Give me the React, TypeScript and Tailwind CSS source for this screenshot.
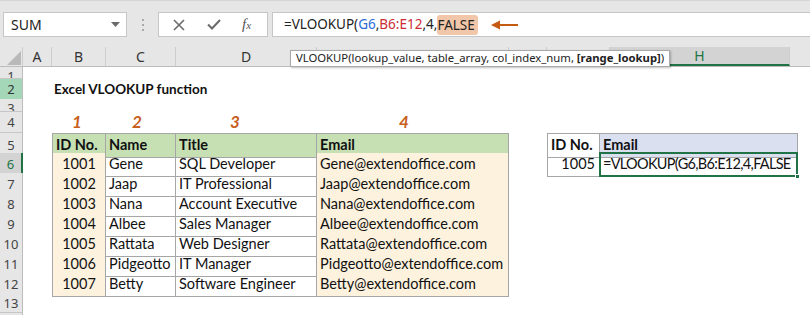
import React from 'react';

const ui = { fontFamily: '"Noto Sans", "Open Sans", sans-serif' };
const cell = { fontFamily: 'Lato, "Open Sans", sans-serif' };

const GRID = 'grid grid-cols-[23px_29px_54px_70px_141px_192px_38px_53px_198px_1fr]';

const data = [
  ['1001', 'Gene', 'SQL Developer', 'Gene@extendoffice.com'],
  ['1002', 'Jaap', 'IT Professional', 'Jaap@extendoffice.com'],
  ['1003', 'Nana', 'Account Executive', 'Nana@extendoffice.com'],
  ['1004', 'Albee', 'Sales Manager', 'Albee@extendoffice.com'],
  ['1005', 'Rattata', 'Web Designer', 'Rattata@extendoffice.com'],
  ['1006', 'Pidgeotto', 'IT Manager', 'Pidgeotto@extendoffice.com'],
  ['1007', 'Betty', 'Software Engineer', 'Betty@extendoffice.com'],
];

const RowHead: React.FC<{ label: string; kind?: 'green' | 'active'; top?: boolean }> = ({ label, kind, top }) => {
  let cls = 'bg-[#e6e6e6] text-[#444]';
  if (kind === 'green') cls = 'bg-[#a3d7b8] text-[#333]';
  if (kind === 'active') cls = 'bg-[#d3d3d3] text-[#217346] border-r-2 border-r-[#217346]';
  return (
    <div
      style={ui}
      className={`${cls} flex justify-center overflow-hidden border-b border-b-[#c6c6c6] text-[13px] leading-[18px] ${top ? 'items-start' : 'items-center'} ${kind === 'active' ? '' : 'border-r border-r-[#bcbcbc]'}`}
    >
      {label}
    </div>
  );
};

const FormulaBar = () => (
  <div className="h-[47px] bg-[#e6e6e6] border-t border-t-[#d6d6d6] flex items-start pt-[11px] pl-[3px]" style={ui}>
    <div className="w-[124px] h-[25px] bg-white border border-[#c6c6c6] flex items-center justify-between pl-[7px] pr-[6px]">
      <span className="text-[14px] text-[#222]">SUM</span>
      <svg width="9" height="5" viewBox="0 0 9 5"><path d="M0 0h9L4.5 5z" fill="#6b6b6b" /></svg>
    </div>
    <div className="w-[31px] h-[25px] flex flex-col items-center justify-center gap-[3px]">
      <span className="w-[2px] h-[2px] bg-[#a8a8a8]" />
      <span className="w-[2px] h-[2px] bg-[#a8a8a8]" />
      <span className="w-[2px] h-[2px] bg-[#a8a8a8]" />
    </div>
    <div className="w-[110px] h-[25px] bg-white border border-[#c6c6c6] flex items-center pl-[13px]">
      <svg width="12" height="12" viewBox="0 0 12 12" className="ml-[1px]">
        <path d="M1 1l10 10M11 1L1 11" stroke="#6a6a6a" strokeWidth="1.6" />
      </svg>
      <svg width="14" height="11" viewBox="0 0 14 11" className="ml-[22px]">
        <path d="M1 5.5l4 4L13 1" stroke="#6a6a6a" strokeWidth="2" fill="none" />
      </svg>
      <span className="ml-[21px] text-[15px] italic text-[#555] leading-none" style={{ fontFamily: '"Liberation Serif", serif' }}>
        f<span className="text-[11px]">x</span>
      </span>
    </div>
    <div className="flex-1 ml-[4px] h-[25px] bg-white border border-[#c6c6c6] border-r-0 flex items-center pl-[11px] text-[13.5px] text-[#222]">
      <span>=VLOOKUP(</span>
      <span className="text-[#2a6bd4]">G6</span>
      <span>,</span>
      <span className="text-[#cc2b36]">B6:E12</span>
      <span>,4,</span>
      <span className="bg-[#f2c6a8] rounded-[3px] pr-[3px] leading-[20px]">FALSE</span>
      <svg width="27" height="10" viewBox="0 0 27 10" className="ml-[13px]">
        <path d="M27 5H6" stroke="#c55a11" strokeWidth="2" />
        <path d="M0 5l9-4.5v9z" fill="#c55a11" />
      </svg>
    </div>
  </div>
);

const ColHeaders = () => {
  const cols: [string, string][] = [
    ['', 'w-[23px]'],
    ['A', 'w-[29px]'],
    ['B', 'w-[54px]'],
    ['C', 'w-[70px]'],
    ['D', 'w-[141px]'],
    ['E', 'w-[192px]'],
    ['F', 'w-[38px]'],
    ['G', 'w-[63px]'],
    ['H', 'w-[180px]'],
  ];
  return (
    <div className="relative h-[20px] flex bg-[#e6e6e6] border-b border-b-[#bcbcbc] text-[14px] text-[#333]" style={ui}>
      {cols.map(([c, w], i) => (
        <div
          key={i}
          className={`${w} h-full flex items-center justify-center border-r border-r-[#cdcdcd] ${
            c === 'H' ? 'bg-[#d3d3d3] text-[#217346] border-b-2 border-b-[#217346]' : ''
          }`}
        >
          {i === 0 ? (
            <svg width="14" height="14" viewBox="0 0 14 14" className="ml-[5px] mt-[2px]">
              <path d="M14 0v14H0z" fill="#b9b9b9" />
            </svg>
          ) : (
            c
          )}
        </div>
      ))}
      <div className="flex-1" />
      {/* function argument tooltip */}
      <div className="absolute left-[290px] top-[3px] w-[380px] h-[17px] bg-white border border-[#a9a9a9] shadow-[1px_1px_2px_rgba(0,0,0,0.25)] pl-[5px] flex items-center text-[11.3px] text-[#222] whitespace-nowrap">
        VLOOKUP(lookup_value, table_array, col_index_num,&nbsp;<b>[range_lookup]</b>)
      </div>
    </div>
  );
};

const tb = 'border-[#a6a6a6]';

export default function App() {
  return (
    <div className="w-[810px] h-[315px] overflow-hidden bg-white">
      <FormulaBar />
      <ColHeaders />

      {/* row 1 */}
      <div className={`${GRID} h-[12px]`}>
        <RowHead label="1" top />
      </div>
      {/* row 2 */}
      <div className={`${GRID} h-[20px]`}>
        <RowHead label="2" kind="green" />
        <div />
        <div className="col-span-4 flex items-end pl-[2px] pb-[1px] font-bold text-[13.5px] text-[#111]" style={cell}>
          Excel VLOOKUP function
        </div>
      </div>
      {/* row 3 */}
      <div className={`${GRID} h-[13px]`}>
        <RowHead label="3" top />
      </div>
      {/* row 4 */}
      <div className={`${GRID} h-[21px]`}>
        <RowHead label="4" />
        <div />
        <div className="pl-[20px] pt-[1px] italic font-bold text-[17px] leading-none text-[#c8601e]" style={cell}>1</div>
        <div className="pl-[26px] pt-[1px] italic font-bold text-[17px] leading-none text-[#c8601e]" style={cell}>2</div>
        <div className="pl-[54px] pt-[1px] italic font-bold text-[17px] leading-none text-[#c8601e]" style={cell}>3</div>
        <div className="pl-[82px] pt-[1px] italic font-bold text-[17px] leading-none text-[#c8601e]" style={cell}>4</div>
      </div>
      {/* row 5: headers */}
      <div className={`${GRID} h-[20px] text-[14.5px] text-[#111]`} style={cell}>
        <RowHead label="5" />
        <div />
        {['ID No.', 'Name', 'Title', 'Email'].map((h, i) => (
          <div
            key={h}
            className={`bg-[#c6e0b4] font-bold flex items-end pb-[1px] pl-[3px] border-t border-r border-b ${tb} ${i === 0 ? 'border-l' : ''}`}
          >
            {h}
          </div>
        ))}
        <div />
        <div className={`font-bold flex items-end pb-[1px] pl-[3px] border ${tb}`}>ID No.</div>
        <div className={`bg-[#dbe0f1] font-bold flex items-end pb-[1px] pl-[3px] border-t border-r border-b ${tb}`}>Email</div>
      </div>
      {/* rows 6-12 */}
      {data.map((r, idx) => (
        <div key={r[0]} className={`${GRID} h-[20px] text-[14.5px] text-[#111]`} style={cell}>
          <RowHead label={String(idx + 6)} kind={idx === 0 ? 'active' : undefined} />
          <div />
          <div className={`bg-[#fdf2de] flex items-end justify-center pb-[1px] border-l border-r border-b ${tb}`}>{r[0]}</div>
          <div className={`flex items-end pb-[1px] pl-[3px] border-r border-b whitespace-nowrap ${tb}`}>{r[1]}</div>
          <div className={`flex items-end pb-[1px] pl-[3px] border-r border-b whitespace-nowrap ${tb}`}>{r[2]}</div>
          <div className={`bg-[#fdf2de] flex items-end pb-[1px] pl-[3px] border-r border-b whitespace-nowrap ${tb}`}>{r[3]}</div>
          <div />
          {idx === 0 ? (
            <>
              <div className={`flex items-end justify-end pb-[1px] pr-[4px] border-l border-r border-b ${tb}`}>1005</div>
              <div className={`relative flex items-end pb-[1px] pl-[3px] border-r border-b whitespace-nowrap tracking-[-0.7px] ${tb}`}>
                =VLOOKUP(G6,B6:E12,4,FALSE
                <div className="absolute -left-[1px] -top-[1px] -right-[1px] -bottom-[1px] border-2 border-[#217346]" />
                <div className="absolute -right-[3px] -bottom-[3px] w-[5px] h-[5px] bg-[#217346] border border-white" />
              </div>
            </>
          ) : null}
        </div>
      ))}
      {/* row 13 */}
      <div className={`${GRID} h-[20px]`}>
        <RowHead label="13" />
      </div>
      <div className={`${GRID} h-[20px]`}>
        <RowHead label="14" />
      </div>
    </div>
  );
}
